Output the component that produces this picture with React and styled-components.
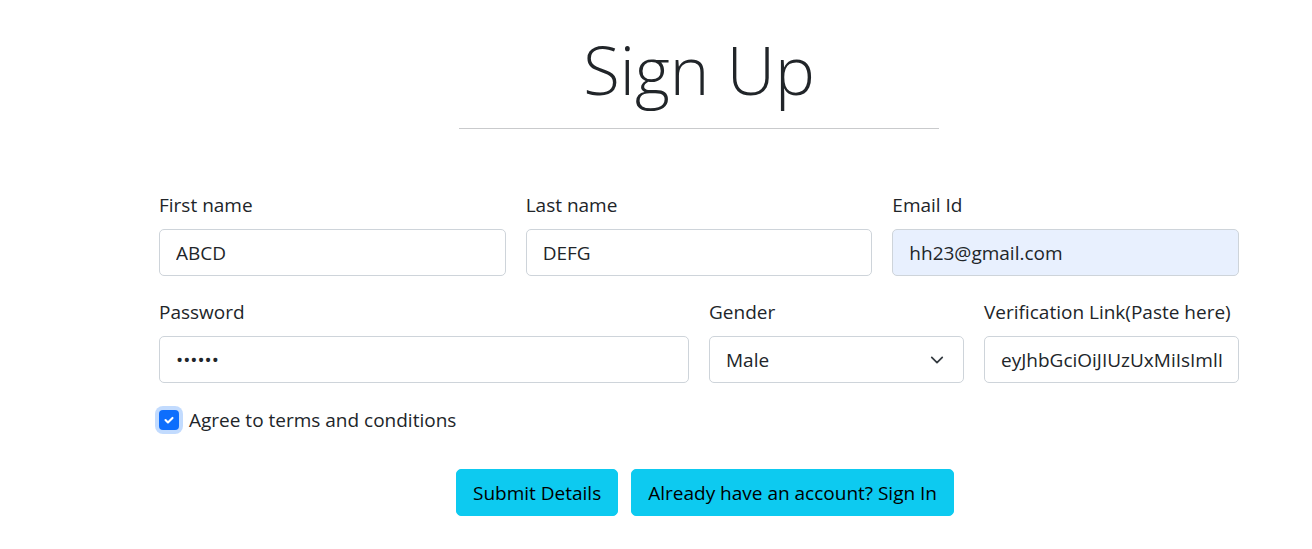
import React from "react";
import styled, { createGlobalStyle } from "styled-components";

const Global = createGlobalStyle`
  body {
    margin: 0;
    background: #fff;
    color: #212529;
    font-family: "Open Sans", "Noto Sans", sans-serif;
  }
  * { box-sizing: border-box; }
`;

const Page = styled.div`
  padding: 0 73px 0 159px;
`;

const Header = styled.header`
  display: flex;
  flex-direction: column;
  align-items: center;
  padding-top: 29px;
`;

const Title = styled.h1`
  margin: 0;
  font-size: 67px;
  font-weight: 300;
  line-height: 1.2;
  color: #212529;
`;

const Rule = styled.hr`
  width: 480px;
  margin: 19px 0 0;
  border: 0;
  border-top: 1px solid #c9cacc;
`;

const Form = styled.form`
  margin-top: 63px;
`;

const Row = styled.div`
  display: grid;
  grid-template-columns: repeat(12, 1fr);
  column-gap: 20px;
  margin-bottom: ${p => p.$gap || 0}px;
`;

const Field = styled.div`
  grid-column: span ${p => p.$span};
  display: flex;
  flex-direction: column;
`;

const Label = styled.label`
  font-size: 19px;
  line-height: 27px;
  margin-bottom: 10px;
`;

const Input = styled.input`
  height: 47px;
  width: 100%;
  padding: 0 16px;
  font: inherit;
  font-size: 19px;
  color: #212529;
  background: ${p => (p.$filled ? "#e8f0fe" : "#fff")};
  border: 1px solid #ced4da;
  border-radius: 5px;
  outline: none;
`;

const SelectBox = styled.div`
  position: relative;
  height: 47px;
  display: flex;
  align-items: center;
  padding: 0 16px;
  font-size: 19px;
  border: 1px solid #ced4da;
  border-radius: 5px;
  background: #fff;
`;

const Chevron = styled.svg`
  position: absolute;
  right: 18px;
  top: 50%;
  margin-top: -7px;
`;

const CheckRow = styled.label`
  display: flex;
  align-items: center;
  gap: 10px;
  margin-top: 24px;
  font-size: 19px;
`;

const Check = styled.span`
  width: 20px;
  height: 20px;
  border-radius: 4px;
  background: #0d6efd;
  box-shadow: 0 0 0 4px rgba(13, 110, 253, 0.25);
  display: flex;
  align-items: center;
  justify-content: center;
`;

const Actions = styled.div`
  display: flex;
  justify-content: center;
  gap: 13px;
  margin-top: 36px;
  padding-left: 12px;
`;

const Button = styled.button`
  height: 47px;
  padding: 0 16px;
  font: inherit;
  font-size: 19px;
  color: #000;
  background: #0dcaf0;
  border: 1px solid #0dcaf0;
  border-radius: 5px;
  cursor: pointer;
`;

export default function App() {
  return (
    <Page>
      <Global />
      <Header>
        <Title>Sign Up</Title>
        <Rule />
      </Header>
      <Form onSubmit={e => e.preventDefault()}>
        <Row $gap={23}>
          <Field $span={4}>
            <Label>First name</Label>
            <Input defaultValue="ABCD" />
          </Field>
          <Field $span={4}>
            <Label>Last name</Label>
            <Input defaultValue="DEFG" />
          </Field>
          <Field $span={4}>
            <Label>Email Id</Label>
            <Input $filled defaultValue="hh23@gmail.com" />
          </Field>
        </Row>
        <Row>
          <Field $span={6}>
            <Label>Password</Label>
            <Input type="password" defaultValue="abcdef" />
          </Field>
          <Field $span={3}>
            <Label>Gender</Label>
            <SelectBox>
              Male
              <Chevron width="16" height="14" viewBox="0 0 16 16">
                <path d="M2 5l6 6 6-6" fill="none" stroke="#343a40" strokeWidth="2" strokeLinecap="round" strokeLinejoin="round" />
              </Chevron>
            </SelectBox>
          </Field>
          <Field $span={3}>
            <Label>Verification Link(Paste here)</Label>
            <Input defaultValue="eyJhbGciOiJIUzUxMiIsImlIkIjoiNjQ" />
          </Field>
        </Row>
        <CheckRow>
          <Check>
            <svg width="14" height="14" viewBox="0 0 20 20">
              <path d="M5 10l3.5 3.5L15 7" fill="none" stroke="#fff" strokeWidth="3" strokeLinecap="round" strokeLinejoin="round" />
            </svg>
          </Check>
          Agree to terms and conditions
        </CheckRow>
        <Actions>
          <Button type="submit">Submit Details</Button>
          <Button type="button">Already have an account? Sign In</Button>
        </Actions>
      </Form>
    </Page>
  );
}
